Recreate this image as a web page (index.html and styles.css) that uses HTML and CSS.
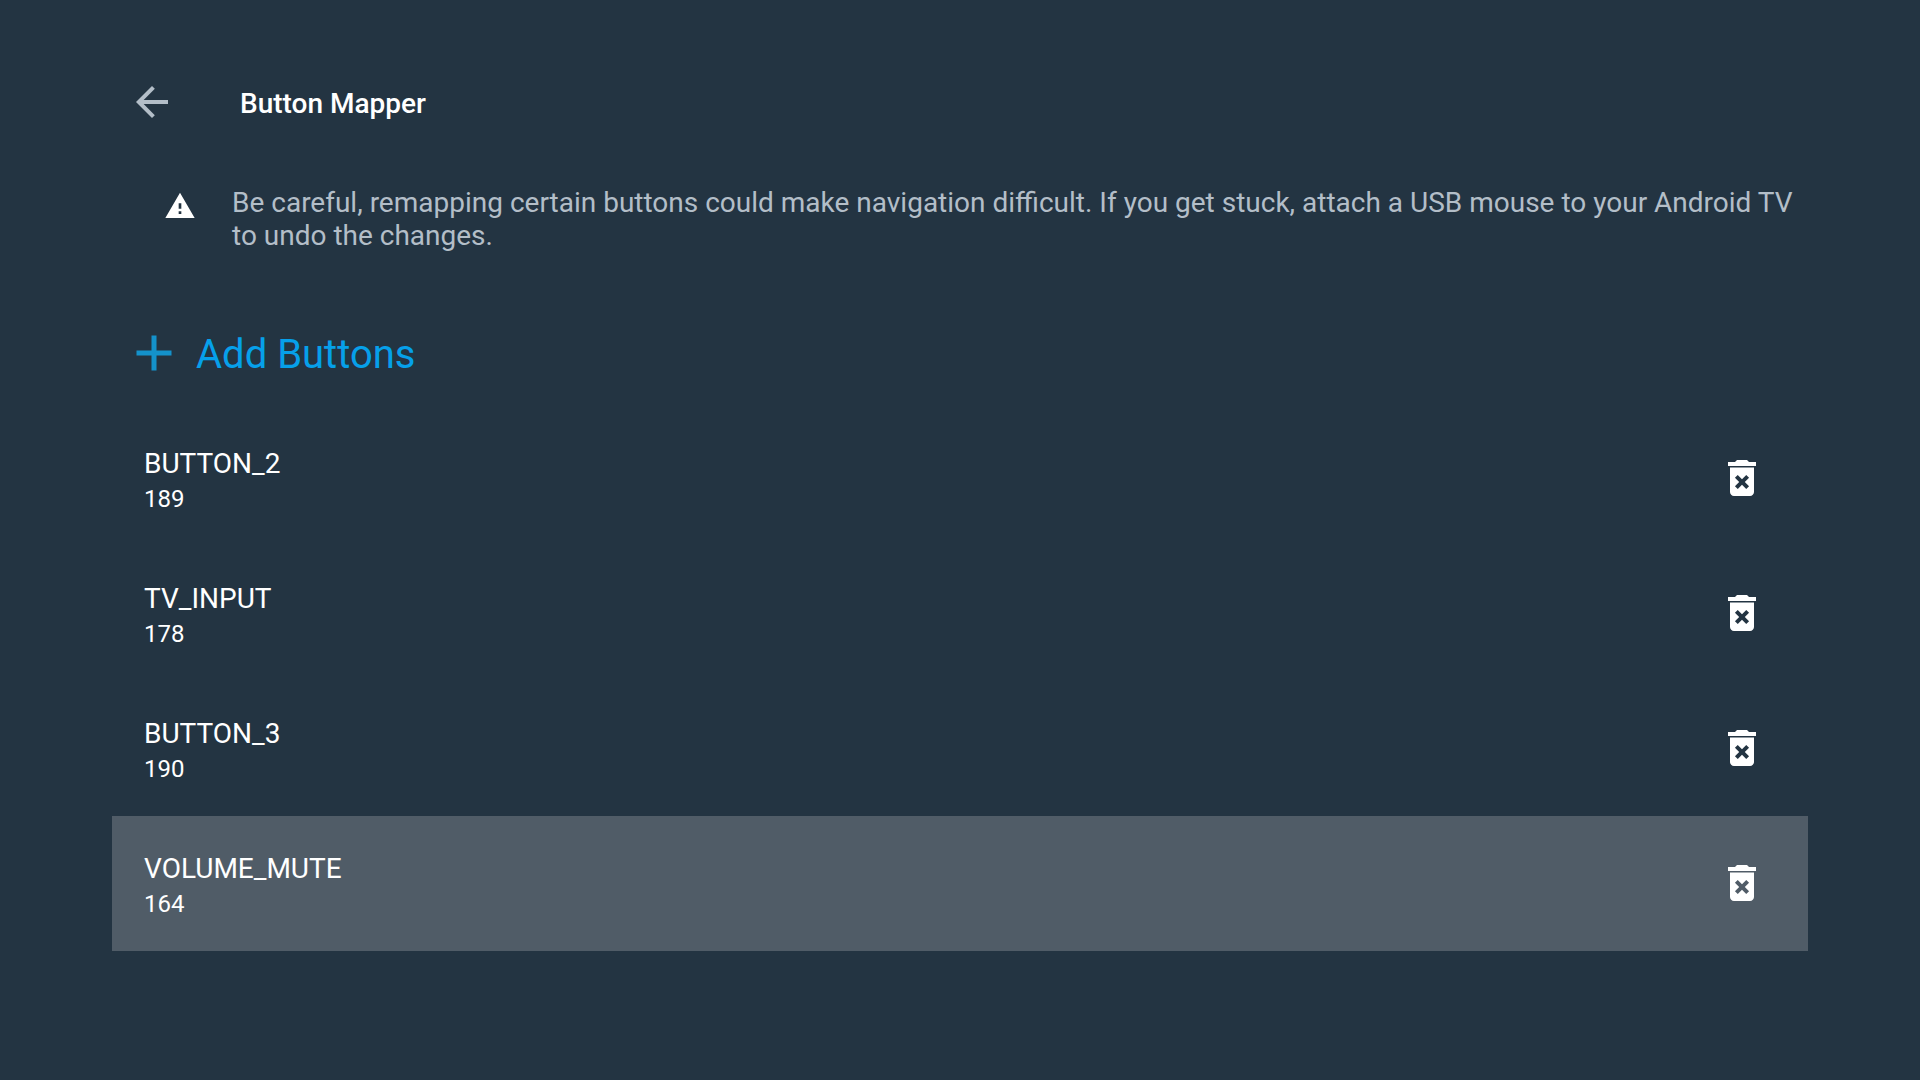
FILE: index.html
```html
<!DOCTYPE html>
<html lang="en">
<head>
    <meta charset="UTF-8">
    <meta name="viewport" content="width=device-width, initial-scale=1.0">
    <title>Button Mapper</title>
    <link rel="stylesheet" href="styles.css">
</head>
<body>

<!-- shared trash icon -->
<svg class="symbols" aria-hidden="true">
    <symbol id="trash" viewBox="0 0 24 24">
        <path d="M6 19c0 1.1.9 2 2 2h8c1.1 0 2-.9 2-2V6.7H6V19zm2.46-7.12l1.41-1.41L12 12.59l2.12-2.12 1.41 1.41L13.41 14l2.12 2.12-1.41 1.41L12 15.41l-2.12 2.12-1.41-1.41L10.59 14l-2.13-2.12zM15.5 4l-1-1h-5l-1 1H5v2h14V4z"/>
    </symbol>
</svg>

<header class="header">
    <button class="back" aria-label="Back">
        <svg viewBox="0 0 24 24"><path d="M20 11H7.83l5.59-5.59L12 4l-8 8 8 8 1.41-1.41L7.83 13H20v-2z"/></svg>
    </button>
    <h1>Button Mapper</h1>
</header>

<main>
    <div class="warning">
        <svg viewBox="0 0 24 24"><path d="M1 21h22L12 2 1 21zm12-3h-2v-2h2v2zm0-4h-2v-4h2v4z"/></svg>
        <p>Be careful, remapping certain buttons could make navigation difficult. If you get stuck, attach a USB mouse to your Android TV to undo the changes.</p>
    </div>

    <button class="add">
        <svg viewBox="0 0 24 24"><path d="M19 13h-6v6h-2v-6H5v-2h6V5h2v6h6v2z"/></svg>
        <span>Add Buttons</span>
    </button>

    <ul class="list">
        <li class="row">
            <div class="label">
                <p class="name">BUTTON_2</p>
                <p class="code">189</p>
            </div>
            <button class="delete" aria-label="Delete BUTTON_2"><svg><use href="#trash"/></svg></button>
        </li>
        <li class="row">
            <div class="label">
                <p class="name">TV_INPUT</p>
                <p class="code">178</p>
            </div>
            <button class="delete" aria-label="Delete TV_INPUT"><svg><use href="#trash"/></svg></button>
        </li>
        <li class="row">
            <div class="label">
                <p class="name">BUTTON_3</p>
                <p class="code">190</p>
            </div>
            <button class="delete" aria-label="Delete BUTTON_3"><svg><use href="#trash"/></svg></button>
        </li>
        <li class="row selected">
            <div class="label">
                <p class="name">VOLUME_MUTE</p>
                <p class="code">164</p>
            </div>
            <button class="delete" aria-label="Delete VOLUME_MUTE"><svg><use href="#trash"/></svg></button>
        </li>
    </ul>
</main>

</body>
</html>
```
FILE: styles.css
```css
* {
    box-sizing: border-box;
}
body {
    margin: 0;
    padding: 54px 112px;
    min-height: 100vh;
    background-color: #233442;
    color: #fff;
    font-family: Roboto, sans-serif;
    font-size: 28px;
    line-height: 33px;
}
h1, p, ul {
    margin: 0;
    padding: 0;
}
button {
    padding: 0;
    border: none;
    background: none;
    color: inherit;
    font: inherit;
    cursor: pointer;
}
svg {
    display: block;
    flex: none;
    fill: currentColor;
}
.symbols {
    position: absolute;
    width: 0;
    height: 0;
}
.header {
    display: flex;
    align-items: center;
    gap: 64px;
    height: 96px;
    padding: 0 16px;
}
.header h1 {
    padding-top: 2px;
    font-size: 28px;
    font-weight: 500;
}
.back {
    color: #b3bec8;
}
.back svg, .delete svg {
    width: 48px;
    height: 48px;
}
.warning {
    display: flex;
    gap: 36px;
    padding: 36px 0 36px 52px;
    color: #b3bec8;
}
.warning svg {
    width: 32px;
    height: 32px;
    margin-top: 4px;
    color: #fff;
}
.add {
    display: flex;
    align-items: center;
    gap: 12px;
    width: 100%;
    height: 123px;
    padding: 7px 12px 0;
    color: #06a0ea;
    font-size: 40px;
}
.add span {
    padding-top: 2px;
}
.add svg {
    width: 60px;
    height: 60px;
    color: #1492cb;
}
.list {
    list-style: none;
}
.row {
    display: flex;
    justify-content: space-between;
    align-items: center;
    height: 135px;
    padding: 0 42px 0 32px;
}
.selected {
    background-color: #505c67;
}
.label {
    padding-top: 4px;
}
.code {
    margin-top: 4px;
    font-size: 24px;
    line-height: 30px;
}
.delete {
    padding-bottom: 2px;
}
```
